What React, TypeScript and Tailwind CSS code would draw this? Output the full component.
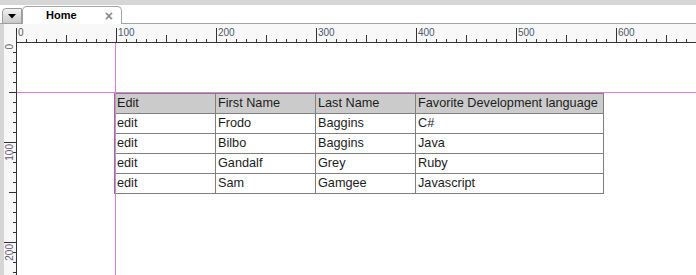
import React from "react";

const rows = [
  ["edit", "Frodo", "Baggins", "C#"],
  ["edit", "Bilbo", "Baggins", "Java"],
  ["edit", "Gandalf", "Grey", "Ruby"],
  ["edit", "Sam", "Gamgee", "Javascript"],
];

const header = ["Edit", "First Name", "Last Name", "Favorite Development language"];

function HRuler() {
  const ticks: number[] = [];
  for (let n = 0; n <= 680; n += 10) ticks.push(n);
  return (
    <svg width={680} height={19} className="block">
      {ticks.map((n) => {
        const x = n + 0.5;
        const y1 = n % 100 === 0 ? 4 : n % 50 === 0 ? 11 : 15;
        return <line key={n} x1={x} x2={x} y1={y1} y2={18} stroke="#333" strokeWidth={1} />;
      })}
      {ticks
        .filter((n) => n % 100 === 0)
        .map((n) => (
          <text
            key={"t" + n}
            x={n + 2}
            y={12}
            fontSize={10}
            fill="#4b5a72"
            fontFamily="'Liberation Sans', Arial, sans-serif"
          >
            {n}
          </text>
        ))}
      <line x1={0} x2={680} y1={18.5} y2={18.5} stroke="#333" />
    </svg>
  );
}

function VRuler() {
  const ticks: number[] = [];
  for (let n = 0; n <= 240; n += 10) ticks.push(n);
  // local y = n - 1 (0 sits on the horizontal ruler's bottom line)
  return (
    <svg width={13} height={232} className="block">
      {ticks.map((n) => {
        const y = n - 0.5;
        const x1 = n % 100 === 0 ? 0 : n % 50 === 0 ? 5 : 9;
        return <line key={n} x1={x1} x2={12.5} y1={y} y2={y} stroke="#333" />;
      })}
      {ticks
        .filter((n) => n % 100 === 0)
        .map((n) => (
          <text
            key={"t" + n}
            x={8.5}
            y={n + 1}
            fontSize={10}
            fill="#6b5a78"
            textAnchor="end"
            transform={`rotate(-90 8.5 ${n + 1})`}
            fontFamily="'Liberation Sans', Arial, sans-serif"
          >
            {n}
          </text>
        ))}
      <line x1={12.5} x2={12.5} y1={0} y2={232} stroke="#333" />
    </svg>
  );
}

export default function App() {
  return (
    <div className="w-[696px] h-[275px] overflow-hidden bg-white font-['Liberation_Sans',Arial,sans-serif] flex flex-col">
      {/* top strip */}
      <div className="h-[5px] bg-[#d6d6d6]" />

      {/* tab bar */}
      <div className="h-[19px] flex items-end border-b border-[#a3a3a3] bg-white">
        <div className="ml-[2px] w-[20px] h-[16px] -mb-px flex items-center justify-center rounded-tl-[4px] border border-[#9c9c9c] bg-gradient-to-b from-[#f2f2f2] to-[#c9c9c9]">
          <svg width="8" height="5" viewBox="0 0 8 5">
            <path d="M0 0 H8 L4 4.5 Z" fill="#000" />
          </svg>
        </div>
        <div className="w-[100px] h-[18px] -mb-px flex items-center border border-b-0 border-[#a3a3a3] rounded-t-[5px] bg-white">
          <span className="ml-[23px] text-[11px] font-bold leading-none text-black">Home</span>
          <span className="ml-auto mr-[8px] text-[14px] font-bold leading-none text-[#8a8a8a]">×</span>
        </div>
      </div>

      {/* horizontal ruler */}
      <div className="h-[19px] flex bg-[#f8f8f8]">
        <div className="w-[16px] flex">
          <div className="w-[4px] bg-[#d6d6d6]" />
        </div>
        <HRuler />
      </div>

      {/* body */}
      <div className="flex-1 flex">
        <div className="w-[17px] flex bg-[#f8f8f8]">
          <div className="w-[4px] bg-[#d6d6d6]" />
          <VRuler />
        </div>
        <div className="relative flex-1 bg-white">
          <div className="ml-[97px] mt-[50px] w-max border-t border-l border-[#808080] text-[12.7px] leading-[19px] text-[#1c1c1c]">
            {[header, ...rows].map((r, i) => (
              <div key={i} className={`grid grid-cols-[101px_100px_100px_188px] ${i === 0 ? "bg-[#cbcbcb]" : "bg-white"}`}>
                {r.map((c, j) => (
                  <div key={j} className="h-[20px] pl-[2px] border-r border-b border-[#808080] whitespace-nowrap overflow-hidden">
                    {c}
                  </div>
                ))}
              </div>
            ))}
          </div>
          {/* guides */}
          <div className="absolute left-[98px] top-0 bottom-0 w-px bg-[#e07ce0]" />
          <div className="absolute left-0 right-0 top-[49px] h-px bg-[#e07ce0]" />
        </div>
      </div>
    </div>
  );
}
